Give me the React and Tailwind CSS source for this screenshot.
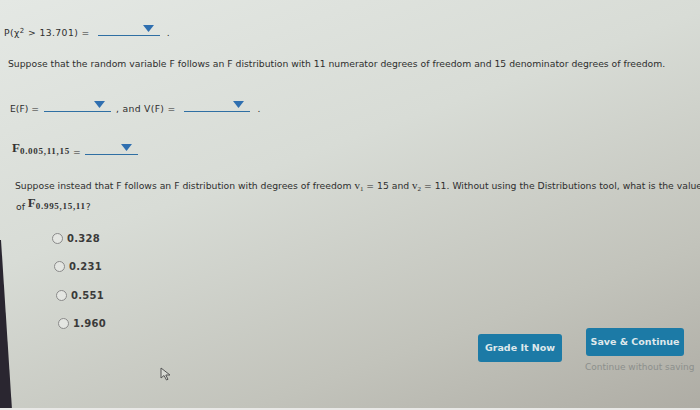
import React from "react";

const sans = { fontFamily: '"DejaVu Sans", Verdana, sans-serif' };
const serif = { fontFamily: '"Liberation Serif", "Times New Roman", serif' };

function Drop({ w }) {
  return (
    <span className={`relative inline-block ${w} h-[12px] border-b border-[#2f6fa3] align-baseline`}>
      <svg className="absolute right-[6px] top-[1px]" width="11" height="7" viewBox="0 0 11 7">
        <polygon points="0,0 11,0 5.5,7" fill="#2f6fb0" />
      </svg>
    </span>
  );
}

function FSym({ sub }) {
  return (
    <span style={serif} className="font-bold text-[#333] text-[13px]">
      F<span className="text-[9px] tracking-[0.7px] align-[-2px]">{sub}</span>
    </span>
  );
}

function Radio({ label, ml }) {
  return (
    <div className={`flex items-center gap-[4px] ${ml}`}>
      <span className="w-[11px] h-[11px] rounded-full border border-[#8a8a8a] bg-[#e4e6e2]" />
      <span style={sans} className="font-bold text-[10px] text-[#3a3a3a] tracking-[0.3px]">{label}</span>
    </div>
  );
}

export default function App() {
  return (
    <div
      style={sans}
      className="relative w-[700px] h-[410px] overflow-hidden bg-[linear-gradient(160deg,#e4e8e4_0%,#d8dcd6_40%,#c2c3bb_75%,#aeaca4_100%)] text-[#2e2e2e] text-[9.25px]"
    >
      <div className="flex flex-col">
        <div className="flex items-end mt-[28px] ml-[4px] h-[12px]">
          <span className="tracking-[0.4px]">P(χ<sup className="text-[7px]">2</sup> &gt; 13.701) =</span>
          <span className="ml-[8px]"><Drop w="w-[62px]" /></span>
          <span className="ml-[7px]">.</span>
        </div>

        <div className="mt-[17px] ml-[8px] whitespace-nowrap">
          Suppose that the random variable F follows an F distribution with 11 numerator degrees of freedom and 15 denominator degrees of freedom.
        </div>

        <div className="flex items-end mt-[33px] ml-[10px] h-[12px]">
          <span>E(F) =</span>
          <span className="ml-[5px]"><Drop w="w-[67px]" /></span>
          <span className="ml-[5px] tracking-[0.3px]">, and V(F) =</span>
          <span className="ml-[9px]"><Drop w="w-[66px]" /></span>
          <span className="ml-[7px]">.</span>
        </div>

        <div className="flex items-end mt-[29px] ml-[12px] h-[14px]">
          <FSym sub="0.005,11,15" />
          <span className="ml-[3px]">=</span>
          <span className="ml-[4px]"><Drop w="w-[53px]" /></span>
        </div>

        <div className="mt-[18px] ml-[15px] whitespace-nowrap">
          Suppose instead that F follows an F distribution with degrees of freedom{" "}
          <span style={serif} className="text-[11px]">v<sub className="text-[7px]">1</sub></span> = 15 and{" "}
          <span style={serif} className="text-[11px]">v<sub className="text-[7px]">2</sub></span> = 11. Without using the Distributions tool, what is the value
        </div>
        <div className="mt-[0px] ml-[16px] flex items-end">
          <span>of&nbsp;</span>
          <FSym sub="0.995,15,11" />
          <span>?</span>
        </div>

        <div className="flex flex-col gap-[13.5px] mt-[17px]">
          <Radio label="0.328" ml="ml-[52px]" />
          <Radio label="0.231" ml="ml-[54px]" />
          <Radio label="0.551" ml="ml-[56px]" />
          <Radio label="1.960" ml="ml-[58px]" />
        </div>
      </div>

      <div className="absolute left-[478px] top-[334px] flex items-start gap-[24px]">
        <button className="w-[84px] h-[28px] rounded-[3px] bg-[#1c7aa6] text-[#dfe8ec] text-[9.5px] font-bold">
          Grade It Now
        </button>
        <div className="flex flex-col items-start -mt-[6px]">
          <button className="w-[98px] h-[28px] rounded-[3px] bg-[#1c7aa6] text-[#dfe8ec] text-[9.5px] font-bold">
            Save &amp; Continue
          </button>
          <span className="mt-[5px] -ml-[1px] text-[9px] text-[#8c8f8c] whitespace-nowrap">Continue without saving</span>
        </div>
      </div>

      <svg className="absolute left-[160px] top-[367px]" width="12" height="14" viewBox="0 0 12 14">
        <polygon points="1,1 1,11 4,8.5 6.5,13 8,12.3 5.8,8 10,8" fill="#d8dad4" stroke="#555" strokeWidth="1" />
      </svg>

      <div className="absolute left-0 top-[240px] w-[13px] h-[170px] bg-[#2a2630] [clip-path:polygon(0_0,1px_0,12px_100%,0_100%)]" />
      <div className="absolute left-0 bottom-0 w-full h-[2px] bg-[#e9e9e7]" />
    </div>
  );
}
